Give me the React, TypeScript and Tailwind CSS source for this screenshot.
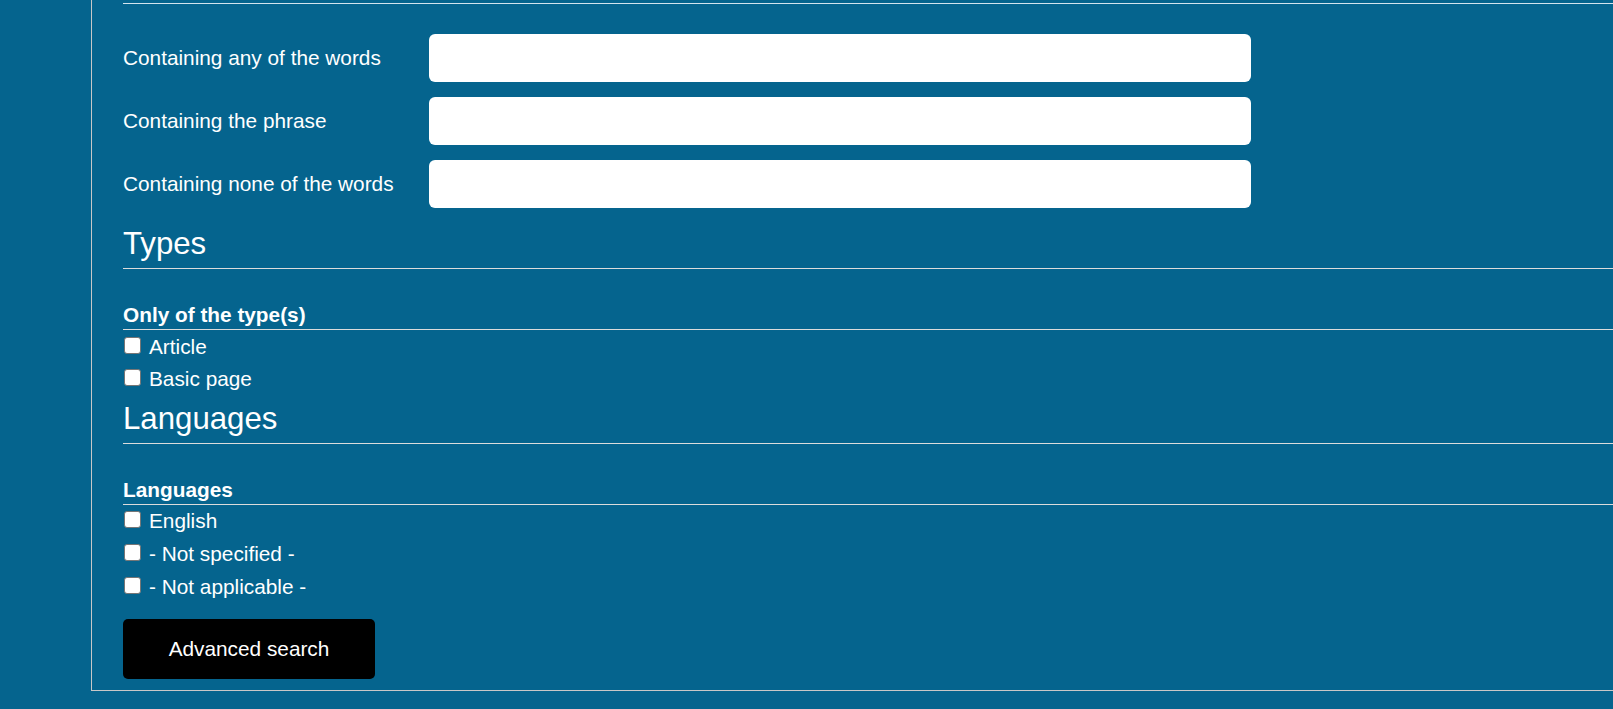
import React from 'react';

const KEYWORD_FIELDS = [
  { id: 'or', label: 'Containing any of the words' },
  { id: 'phrase', label: 'Containing the phrase' },
  { id: 'negative', label: 'Containing none of the words' },
];

const TYPES = [
  { id: 'article', label: 'Article' },
  { id: 'page', label: 'Basic page' },
];

const LANGUAGES = [
  { id: 'en', label: 'English' },
  { id: 'und', label: '- Not specified -' },
  { id: 'zxx', label: '- Not applicable -' },
];

function CheckRow({ id, label, h }: { id: string; label: string; h: string }) {
  return (
    <label htmlFor={id} className={`flex items-start ${h}`}>
      <input
        id={id}
        type="checkbox"
        className="appearance-none ml-[1px] w-[17px] h-[17px] bg-white border border-[#767676] rounded-[3px] shrink-0"
      />
      <span className="ml-[8px] -mt-[2px] leading-[24px]">{label}</span>
    </label>
  );
}

export default function App() {
  return (
    <div
      className="min-h-[709px] bg-[#05648e] text-white overflow-hidden text-[20.8px]"
      style={{ fontFamily: '"Liberation Sans", Arial, sans-serif' }}
    >
      <div className="ml-[91px] w-[1600px] border-l border-b border-[#c8c8c8] pl-[31px] pb-[11px]">
        {/* tail of the section above */}
        <div className="h-[4px] border-b border-[#d3e4ee]" />

        {/* Keyword fields */}
        <div className="mt-[30px] flex flex-col gap-[15px]">
          {KEYWORD_FIELDS.map((f) => (
            <div key={f.id} className="flex items-center h-[48px]">
              <label htmlFor={f.id} className="w-[306px] leading-[24px]">
                {f.label}
              </label>
              <input
                id={f.id}
                type="text"
                className="w-[822px] h-[48px] bg-white rounded-[6px] outline-none px-3 text-black"
              />
            </div>
          ))}
        </div>

        {/* Types */}
        <h2 className="mt-[18px] text-[31.2px] leading-[36px] pb-[6px] border-b border-[#dcdcdc] font-normal">
          Types
        </h2>
        <div className="mt-[34px] font-bold leading-[24px] pb-[2px] border-b border-[#dcdcdc]">
          Only of the type(s)
        </div>
        <div className="mt-[7px]">
          {TYPES.map((t) => (
            <CheckRow key={t.id} id={t.id} label={t.label} h="h-[32px]" />
          ))}
        </div>

        {/* Languages */}
        <h2 className="text-[31.2px] leading-[36px] pb-[6px] border-b border-[#dcdcdc] font-normal">
          Languages
        </h2>
        <div className="mt-[34px] font-bold leading-[24px] pb-[2px] border-b border-[#dcdcdc]">
          Languages
        </div>
        <div className="mt-[6px]">
          {LANGUAGES.map((l) => (
            <CheckRow key={l.id} id={l.id} label={l.label} h="h-[33px]" />
          ))}
        </div>

        <button
          type="button"
          className="mt-[9px] w-[252px] h-[60px] bg-black text-white rounded-[5px] leading-[24px]"
        >
          Advanced search
        </button>
      </div>
    </div>
  );
}
